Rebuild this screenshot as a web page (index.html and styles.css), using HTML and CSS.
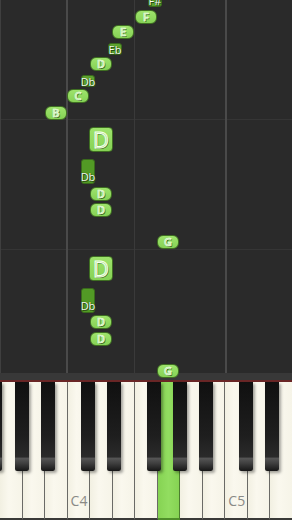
FILE: index.html
```html
<!DOCTYPE html>
<html lang="en">
<head>
    <meta charset="UTF-8">
    <meta name="viewport" content="width=device-width, initial-scale=1.0">
    <title>Piano roll</title>
    <link rel="stylesheet" href="styles.css">
</head>
<body>
    <div class="app">
        <!-- falling notes -->
        <div class="roll">
            <div class="note black-note" style="left:148px; top:-6px; height:13px;">F#</div>
            <div class="note" style="left:135px; top:10px;">F</div>
            <div class="note" style="left:112px; top:25px;">E</div>
            <div class="note black-note" style="left:108px; top:43px; height:12px;">Eb</div>
            <div class="note" style="left:90px; top:57px;">D</div>
            <div class="note black-note" style="left:81px; top:75px; height:12px;">Db</div>
            <div class="note" style="left:67px; top:89px;">C</div>
            <div class="note" style="left:45px; top:106px;">B</div>

            <div class="note big" style="left:89px; top:127px;">D</div>
            <div class="note black-note tall" style="left:81px; top:159px;">Db</div>
            <div class="note" style="left:90px; top:187px;">D</div>
            <div class="note" style="left:90px; top:203px;">D</div>
            <div class="note" style="left:157px; top:235px;">G</div>

            <div class="note big" style="left:89px; top:256px;">D</div>
            <div class="note black-note tall" style="left:81px; top:288px;">Db</div>
            <div class="note" style="left:90px; top:315px;">D</div>
            <div class="note" style="left:90px; top:332px;">D</div>
            <div class="note" style="left:157px; top:364px;">G</div>
        </div>

        <!-- keyboard -->
        <div class="keyboard">
            <div class="white-key"></div>
            <div class="white-key"></div>
            <div class="white-key"></div>
            <div class="white-key"><span class="label">C4</span></div>
            <div class="white-key"></div>
            <div class="white-key"></div>
            <div class="white-key"></div>
            <div class="white-key pressed"></div>
            <div class="white-key"></div>
            <div class="white-key"></div>
            <div class="white-key"><span class="label">C5</span></div>
            <div class="white-key"></div>
            <div class="white-key last"></div>

            <div class="black-key" style="left:-12px;"></div>
            <div class="black-key" style="left:15px;"></div>
            <div class="black-key" style="left:41px;"></div>
            <div class="black-key" style="left:81px;"></div>
            <div class="black-key" style="left:107px;"></div>
            <div class="black-key" style="left:147px;"></div>
            <div class="black-key" style="left:173px;"></div>
            <div class="black-key" style="left:199px;"></div>
            <div class="black-key" style="left:239px;"></div>
            <div class="black-key" style="left:265px;"></div>
        </div>
    </div>
</body>
</html>
```

FILE: styles.css
```css
body {
    margin: 0;
    background: #2a2a2a;
    font-family: 'Open Sans', 'DejaVu Sans', sans-serif;
}
.app {
    width: 292px;
    height: 520px;
    overflow: hidden;
    display: flex;
    flex-direction: column;
}
.roll {
    position: relative;
    height: 380px;
    flex: none;
    background-color: #2a2a2a;
    background-image:
        linear-gradient(to bottom, transparent 373px, #383838 373px),
        linear-gradient(to right, #3f3f3f 0, #3f3f3f 1px, transparent 1px),
        linear-gradient(to right, transparent 66px, #4a4a4a 66px, #4a4a4a 68px, transparent 68px),
        linear-gradient(to right, transparent 134px, #3a3a3a 134px, #3a3a3a 135px, transparent 135px),
        linear-gradient(to right, transparent 225px, #4a4a4a 225px, #4a4a4a 227px, transparent 227px),
        linear-gradient(to bottom, transparent 119px, #353535 119px, #353535 120px, transparent 120px),
        linear-gradient(to bottom, transparent 249px, #353535 249px, #353535 250px, transparent 250px);
}
.note {
    position: absolute;
    width: 22px;
    height: 14px;
    box-sizing: border-box;
    border: 1px solid #3f6f22;
    border-radius: 6px;
    background: linear-gradient(#9ee36c, #86d255);
    color: #b4ee8c;
    -webkit-text-stroke: 0.6px #f2fff0;
    text-shadow: 1px 1px 0 #3d6a22;
    font-size: 11px;
    font-weight: 600;
    line-height: 12px;
    text-align: center;
}
.black-note {
    width: 14px;
    border-radius: 3px;
    background: #5ea42f;
    border-color: #3a6a1c;
    color: #f4fff0;
    -webkit-text-stroke: 0;
    text-shadow: 0 0 1px #1f3d0e, 1px 1px 0 #2c4f16;
    font-size: 11px;
    font-weight: 400;
    line-height: 11px;
    overflow: visible;
    white-space: nowrap;
    display: flex;
    justify-content: center;
}
.tall {
    height: 25px;
    align-items: flex-end;
    background: #529a25;
    line-height: 12px;
}
.big {
    width: 24px;
    height: 25px;
    border-radius: 4px;
    font-size: 22px;
    font-weight: 400;
    line-height: 23px;
    color: #a6e57a;
    -webkit-text-stroke: 1px #f6fff2;
}
.keyboard {
    position: relative;
    flex: 1;
    display: flex;
    border-top: 2px solid #6a2626;
    background: #f7f5e9;
}
.white-key {
    flex: 1;
    position: relative;
    box-sizing: border-box;
    border-right: 1px solid #6a6a66;
    border-bottom: 2px solid #3a3a38;
    background: linear-gradient(to right, #f2f0e2, #faf8ee 40%, #f6f4e8);
}
.white-key.last {
    border-right: none;
}
.white-key.pressed {
    background: linear-gradient(to right, #86d353, #92dd60 50%, #86d353);
    border-right-color: #4d7d30;
    border-bottom: 2px solid #4f8f2a;
}
.label {
    position: absolute;
    left: 3px;
    bottom: 8px;
    font-family: 'Open Sans', 'DejaVu Sans', sans-serif;
    font-size: 14px;
    color: #8a8a86;
}
.black-key {
    position: absolute;
    top: 0;
    width: 14px;
    height: 89px;
    box-sizing: border-box;
    border-radius: 0 0 2px 2px;
    background: linear-gradient(to bottom, #101010 0, #1e1e1e 60%, #2a2a2a 84%, #555 86%, #3c3c3c 92%, #161616 100%);
    box-shadow: 2px 2px 3px rgba(0, 0, 0, 0.35);
}
```
